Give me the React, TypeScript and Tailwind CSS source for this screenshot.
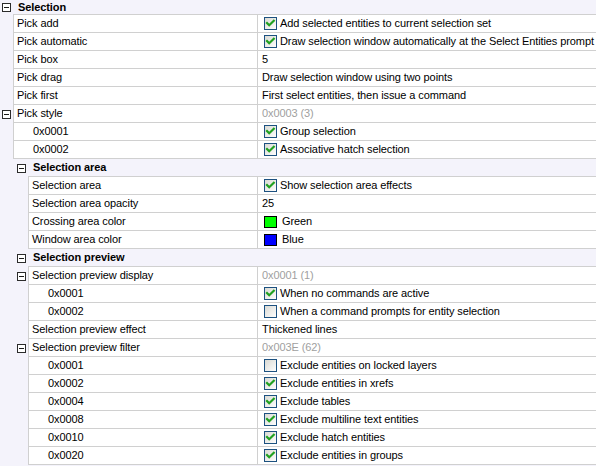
import React from "react";

type Value =
  | { type: "text"; text: string }
  | { type: "gray"; text: string }
  | { type: "check"; checked: boolean; text: string }
  | { type: "color"; color: string; text: string };

type Row =
  | { kind: "header"; level: 1 | 2; label: string; first?: boolean }
  | { kind: "prop"; level: 1 | 2; name: string; nested?: boolean; expander?: boolean; value: Value };

const rows: Row[] = [
  { kind: "header", level: 1, label: "Selection", first: true },
  { kind: "prop", level: 1, name: "Pick add", value: { type: "check", checked: true, text: "Add selected entities to current selection set" } },
  { kind: "prop", level: 1, name: "Pick automatic", value: { type: "check", checked: true, text: "Draw selection window automatically at the Select Entities prompt" } },
  { kind: "prop", level: 1, name: "Pick box", value: { type: "text", text: "5" } },
  { kind: "prop", level: 1, name: "Pick drag", value: { type: "text", text: "Draw selection window using two points" } },
  { kind: "prop", level: 1, name: "Pick first", value: { type: "text", text: "First select entities, then issue a command" } },
  { kind: "prop", level: 1, name: "Pick style", expander: true, value: { type: "gray", text: "0x0003 (3)" } },
  { kind: "prop", level: 1, name: "0x0001", nested: true, value: { type: "check", checked: true, text: "Group selection" } },
  { kind: "prop", level: 1, name: "0x0002", nested: true, value: { type: "check", checked: true, text: "Associative hatch selection" } },
  { kind: "header", level: 2, label: "Selection area" },
  { kind: "prop", level: 2, name: "Selection area", value: { type: "check", checked: true, text: "Show selection area effects" } },
  { kind: "prop", level: 2, name: "Selection area opacity", value: { type: "text", text: "25" } },
  { kind: "prop", level: 2, name: "Crossing area color", value: { type: "color", color: "#00ff00", text: "Green" } },
  { kind: "prop", level: 2, name: "Window area color", value: { type: "color", color: "#0000ff", text: "Blue" } },
  { kind: "header", level: 2, label: "Selection preview" },
  { kind: "prop", level: 2, name: "Selection preview display", expander: true, value: { type: "gray", text: "0x0001 (1)" } },
  { kind: "prop", level: 2, name: "0x0001", nested: true, value: { type: "check", checked: true, text: "When no commands are active" } },
  { kind: "prop", level: 2, name: "0x0002", nested: true, value: { type: "check", checked: false, text: "When a command prompts for entity selection" } },
  { kind: "prop", level: 2, name: "Selection preview effect", value: { type: "text", text: "Thickened lines" } },
  { kind: "prop", level: 2, name: "Selection preview filter", expander: true, value: { type: "gray", text: "0x003E (62)" } },
  { kind: "prop", level: 2, name: "0x0001", nested: true, value: { type: "check", checked: false, text: "Exclude entities on locked layers" } },
  { kind: "prop", level: 2, name: "0x0002", nested: true, value: { type: "check", checked: true, text: "Exclude entities in xrefs" } },
  { kind: "prop", level: 2, name: "0x0004", nested: true, value: { type: "check", checked: true, text: "Exclude tables" } },
  { kind: "prop", level: 2, name: "0x0008", nested: true, value: { type: "check", checked: true, text: "Exclude multiline text entities" } },
  { kind: "prop", level: 2, name: "0x0010", nested: true, value: { type: "check", checked: true, text: "Exclude hatch entities" } },
  { kind: "prop", level: 2, name: "0x0020", nested: true, value: { type: "check", checked: true, text: "Exclude entities in groups" } },
];

function Expander() {
  return (
    <span className="flex h-[9px] w-[9px] items-center justify-center border border-[#2b2b2b] bg-white">
      <span className="h-px w-[5px] bg-[#1a1a1a]" />
    </span>
  );
}

function CheckBox({ checked }: { checked: boolean }) {
  return (
    <svg width="13" height="13" viewBox="0 0 13 13" className="shrink-0">
      <defs>
        <linearGradient id="cbfill" x1="0" y1="0" x2="1" y2="1">
          <stop offset="0" stopColor="#d8d8d2" />
          <stop offset="1" stopColor="#ffffff" />
        </linearGradient>
      </defs>
      <rect x="0.5" y="0.5" width="12" height="12" fill="url(#cbfill)" stroke="#1c5180" />
      {checked && (
        <path d="M3 6 L5.2 8.3 L9.8 3.7" fill="none" stroke="#21a121" strokeWidth="2.2" strokeLinecap="square" />
      )}
    </svg>
  );
}

function ValueCell({ value }: { value: Value }) {
  if (value.type === "text") return <span className="whitespace-nowrap pl-[4px] text-black">{value.text}</span>;
  if (value.type === "gray") return <span className="pl-[4px] text-[#a0a0a0]">{value.text}</span>;
  if (value.type === "check")
    return (
      <span className="flex items-center gap-[3px] whitespace-nowrap pl-[6px] text-black">
        <CheckBox checked={value.checked} />
        {value.text}
      </span>
    );
  return (
    <span className="flex items-center gap-[5px] pl-[6px] text-black">
      <span className="h-[12px] w-[13px] border border-black" style={{ backgroundColor: value.color }} />
      {value.text}
    </span>
  );
}

export default function App() {
  return (
    <div
      className="h-[466px] w-[596px] overflow-hidden bg-[#f4f3fb] text-[11px] leading-[17px] tracking-[-0.09px] text-black"
      style={{ fontFamily: '"Liberation Sans", Arial, sans-serif' }}
    >
      {rows.map((row, i) => {
        const gutter = row.level === 1 ? "w-[13px] pl-[2px]" : "w-[28px] pl-[17px]";
        if (row.kind === "header") {
          return (
            <div key={i} className={`flex ${row.first ? "h-[15px]" : "h-[18px]"}`}>
              <div className={`flex shrink-0 items-center ${gutter}`}>
                <Expander />
              </div>
              <div className="flex flex-1 items-center border-b border-[#d0d0d0] pl-[5px] font-bold">{row.label}</div>
            </div>
          );
        }
        return (
          <div key={i} className="flex h-[18px]">
            <div className="flex w-[257px] shrink-0">
              <div className={`flex shrink-0 items-center ${gutter}`}>{row.expander && <Expander />}</div>
              <div
                className={`flex flex-1 items-center border-b border-l border-[#d0d0d0] bg-white ${
                  row.nested ? "pl-[19px]" : "pl-[3px]"
                }`}
              >
                {row.name}
              </div>
            </div>
            <div className="flex flex-1 items-center overflow-hidden border-b border-l border-[#d0d0d0] bg-white">
              <ValueCell value={row.value} />
            </div>
          </div>
        );
      })}
    </div>
  );
}
